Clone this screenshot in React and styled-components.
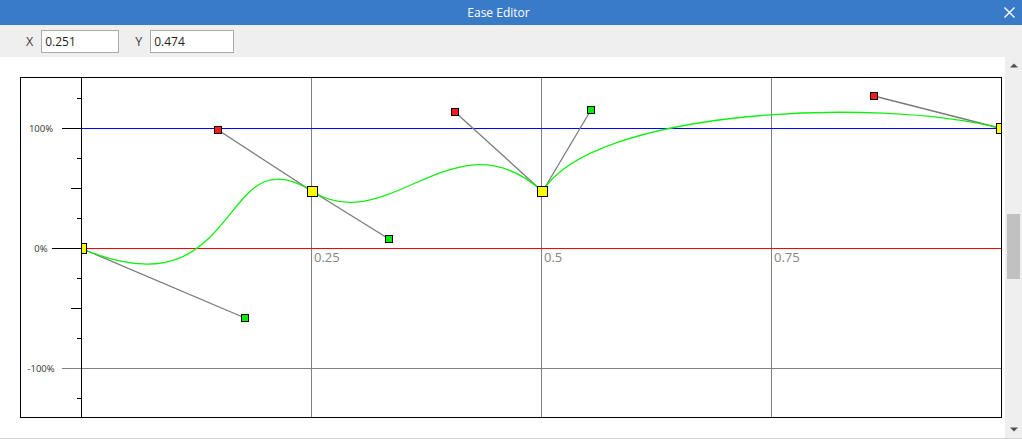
import React from "react";
import styled, { createGlobalStyle } from "styled-components";

const GlobalStyle = createGlobalStyle`
  html, body {
    margin: 0;
    padding: 0;
    overflow: hidden;
    background: #ffffff;
  }
  body {
    font-family: "Open Sans", "Noto Sans", sans-serif;
  }
`;

const Window = styled.div`
  display: flex;
  flex-direction: column;
  width: 1022px;
  height: 439px;
`;

const TitleBar = styled.div`
  display: flex;
  align-items: center;
  height: 25px;
  background: #3a7bc8;
  color: #ffffff;
`;

const Title = styled.div`
  flex: 1;
  text-align: center;
  font-size: 12px;
  line-height: 25px;
`;

const CloseButton = styled.div`
  display: flex;
  align-items: center;
  justify-content: center;
  width: 25px;
  height: 25px;
`;

const Toolbar = styled.div`
  display: flex;
  align-items: center;
  gap: 16px;
  height: 32px;
  padding-left: 26px;
  background: #efefef;
`;

const Field = styled.label`
  display: flex;
  align-items: center;
  gap: 8px;
`;

const FieldLabel = styled.span`
  font-size: 12.5px;
  color: #3c3c3c;
`;

const Input = styled.input`
  box-sizing: border-box;
  width: ${({ $width }) => $width}px;
  height: 23px;
  padding: 0 3px;
  border: 1px solid #ababab;
  background: #ffffff;
  font-family: "Open Sans", "Noto Sans", sans-serif;
  font-size: 12px;
  color: #1e1e1e;
  outline: none;
`;

const Body = styled.div`
  display: flex;
  flex: 1;
  min-height: 0;
  border-bottom: 1px solid #d2d2d2;
`;

const Content = styled.div`
  flex: 1;
  overflow: hidden;
  padding: 20px 0 0 20px;
  background: #ffffff;
`;

const Chart = styled.svg`
  display: block;
  width: 983px;
  height: 341px;
  font-family: "Open Sans", "Noto Sans", sans-serif;
`;

const Scrollbar = styled.div`
  display: flex;
  flex-direction: column;
  width: 17px;
  background: #efefef;
`;

const ScrollArrow = styled.div`
  display: flex;
  align-items: center;
  justify-content: center;
  height: 17px;
`;

const Track = styled.div`
  flex: 1;
  padding: 0 2px;
`;

const Thumb = styled.div`
  height: 65px;
  background: #c1c1c1;
`;

// chart coordinates are page pixels (viewBox starts at the chart's corner)
const PLOT_LEFT = 81.5;
const PLOT_RIGHT = 1001.5;
const TOP = 77.5;
const BOTTOM = 417.5;

const keys = [
  { x: 81.5, y: 248.5, out: [245, 318] },
  { x: 312.5, y: 191.5, in: [218, 130], out: [389, 239] },
  { x: 542.5, y: 191.5, in: [455, 112], out: [591, 110] },
  { x: 1001.5, y: 128.5, in: [874, 96] },
];

const buildCurve = () => {
  let d = `M${keys[0].x},${keys[0].y}`;
  for (let i = 1; i < keys.length; i++) {
    const a = keys[i - 1];
    const b = keys[i];
    d += ` C${a.out[0]},${a.out[1]} ${b.in[0]},${b.in[1]} ${b.x},${b.y}`;
  }
  return d;
};

// y ticks every 25%, 30px apart
const ticks = [];
for (let i = -5; i <= 5; i++) {
  const y = 248.5 - i * 30;
  let from = 77;
  if (i % 4 === 0) from = i === 0 ? 52 : 62;
  else if (i % 2 === 0) from = 71;
  ticks.push({ y, from });
}

const yLabels = [
  { text: "100%", y: 128 },
  { text: "0%", y: 248 },
  { text: "-100%", y: 368 },
];

const xGrid = [
  { x: 311.5, label: "0.25" },
  { x: 541.5, label: "0.5" },
  { x: 771.5, label: "0.75" },
];

const HandleBox = ({ at, fill }) => (
  <rect
    x={Math.round(at[0]) - 3.5}
    y={Math.round(at[1]) - 3.5}
    width={7}
    height={7}
    fill={fill}
    stroke="#000"
    strokeWidth={1}
  />
);

const EaseChart = () => (
  <Chart viewBox="20 77 983 341">
    <defs>
      <clipPath id="plot">
        <rect x={PLOT_LEFT} y={TOP} width={PLOT_RIGHT - PLOT_LEFT} height={BOTTOM - TOP} />
      </clipPath>
    </defs>
    <rect x={20} y={77} width={983} height={341} fill="#fff" />

    {xGrid.map((g) => (
      <g key={g.label}>
        <line x1={g.x} y1={TOP} x2={g.x} y2={BOTTOM} stroke="#808080" />
        <text x={g.x + 2.5} y={262} fontSize="13" fill="#858585">
          {g.label}
        </text>
      </g>
    ))}

    <line x1={62} y1={368.5} x2={PLOT_RIGHT} y2={368.5} stroke="#808080" />
    <line x1={PLOT_LEFT} y1={128.5} x2={PLOT_RIGHT} y2={128.5} stroke="#0000ff" />
    <line x1={PLOT_LEFT} y1={248.5} x2={PLOT_RIGHT} y2={248.5} stroke="#ff0000" />

    {ticks.map((t) => (
      <line
        key={t.y}
        x1={t.from}
        y1={t.y}
        x2={PLOT_LEFT}
        y2={t.y}
        stroke={t.y === 368.5 ? "#808080" : "#000"}
      />
    ))}

    {yLabels.map((l) => (
      <text
        key={l.text}
        x={41}
        y={l.y + 3.5}
        fontSize="9.5"
        fill="#333"
        textAnchor="middle"
      >
        {l.text}
      </text>
    ))}

    {keys.map((k, i) => (
      <g key={`h${i}`}>
        {k.in && (
          <line x1={k.x} y1={k.y} x2={k.in[0]} y2={k.in[1]} stroke="#7a7a7a" strokeWidth={1.3} />
        )}
        {k.out && (
          <line x1={k.x} y1={k.y} x2={k.out[0]} y2={k.out[1]} stroke="#7a7a7a" strokeWidth={1.3} />
        )}
      </g>
    ))}

    <path d={buildCurve()} fill="none" stroke="#11f011" strokeWidth={1.3} />

    {keys.map((k, i) => (
      <g key={`b${i}`}>
        {k.in && <HandleBox at={k.in} fill="#ff1a1a" />}
        {k.out && <HandleBox at={k.out} fill="#00ee00" />}
      </g>
    ))}

    <g clipPath="url(#plot)">
      {keys.map((k, i) => (
        <rect
          key={`k${i}`}
          x={k.x - 5}
          y={k.y - 5}
          width={10}
          height={10}
          fill="#ffff00"
          stroke="#000"
        />
      ))}
    </g>

    <line x1={PLOT_LEFT} y1={TOP} x2={PLOT_LEFT} y2={BOTTOM} stroke="#000" />
    <rect x={20.5} y={TOP} width={981} height={340} fill="none" stroke="#000" />
  </Chart>
);

const App = () => {
  return (
    <>
      <GlobalStyle />
      <Window>
        <TitleBar>
          <Title>Ease Editor</Title>
          <CloseButton>
            <svg width="11" height="11" viewBox="0 0 11 11">
              <path d="M0.5 0.5 L10.5 10.5 M10.5 0.5 L0.5 10.5" stroke="#fff" strokeWidth="1.4" />
            </svg>
          </CloseButton>
        </TitleBar>

        <Toolbar>
          <Field>
            <FieldLabel>X</FieldLabel>
            <Input $width={78} defaultValue="0.251" />
          </Field>
          <Field>
            <FieldLabel>Y</FieldLabel>
            <Input $width={84} defaultValue="0.474" />
          </Field>
        </Toolbar>

        <Body>
          <Content>
            <EaseChart />
          </Content>
          <Scrollbar>
            <ScrollArrow>
              <svg width="8" height="5" viewBox="0 0 8 5">
                <path d="M0 4.5 L4 0.5 L8 4.5 Z" fill="#505050" />
              </svg>
            </ScrollArrow>
            <Track>
              <Thumb style={{ marginTop: 140 }} />
            </Track>
            <ScrollArrow>
              <svg width="8" height="5" viewBox="0 0 8 5">
                <path d="M0 0.5 L4 4.5 L8 0.5 Z" fill="#505050" />
              </svg>
            </ScrollArrow>
          </Scrollbar>
        </Body>
      </Window>
    </>
  );
};

export default App;
